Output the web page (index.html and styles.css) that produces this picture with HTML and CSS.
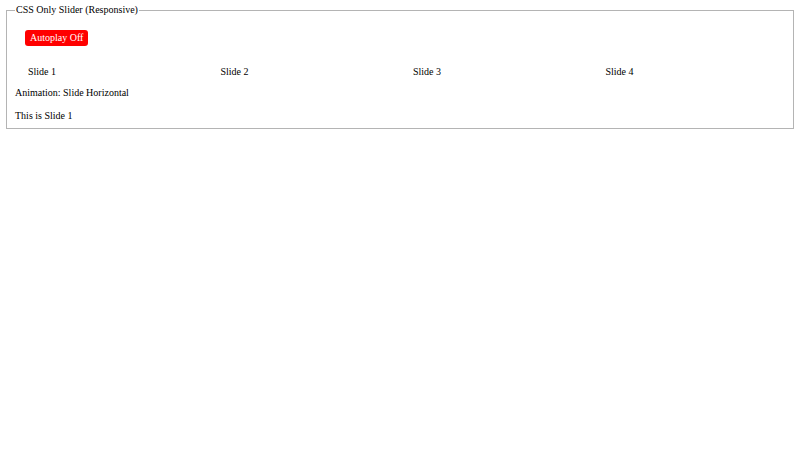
FILE: index.html
```html
<!DOCTYPE html>
<html>
<head>
<meta charset="utf-8">
<link rel="stylesheet" href="styles.css">
</head>
<body>
<fieldset class="slider">
  <legend class="slider-title">CSS Only Slider (Responsive)</legend>
  <div class="controls"><button class="autoplay">Autoplay Off</button></div>
  <div class="tabs">
    <span class="tab">Slide 1</span>
    <span class="tab">Slide 2</span>
    <span class="tab">Slide 3</span>
    <span class="tab">Slide 4</span>
  </div>
  <p class="info">Animation: Slide Horizontal</p>
  <p class="info info-slide">This is Slide 1</p>
</fieldset>
</body>
</html>
```
FILE: styles.css
```css
html, body { margin: 0; padding: 0; background: #fff; }
body {
  font-family: "Liberation Serif", "Times New Roman", serif;
  font-size: 10px;
  line-height: 12px;
  color: #000;
  padding: 4px 6px;
}
.slider {
  margin: 0;
  border: 1px solid #b4b4b4;
  padding: 0 8px 6px 8px;
}
.slider-title {
  padding: 0 1px;
  font-size: 10px;
  line-height: 12px;
}
.controls { padding: 14px 0 0 10px; display: flex; }
.autoplay {
  font-family: inherit;
  font-size: 10px;
  background: #f00;
  color: #fff;
  border: none;
  border-radius: 3px;
  padding: 0 5px;
  height: 16px;
  line-height: 16px;
}
.tabs {
  display: grid;
  grid-template-columns: repeat(4, 1fr);
  margin-top: 20px;
}
.tab { padding-left: 13px; }
.info { margin: 9px 0 0 0; }
.info-slide { margin-top: 11px; }
```
